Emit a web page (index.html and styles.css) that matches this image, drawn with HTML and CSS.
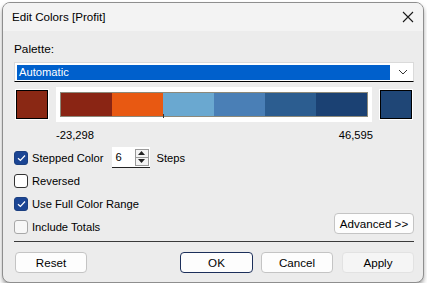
FILE: index.html
```html
<!DOCTYPE html>
<html>
<head>
<meta charset="utf-8">
<link rel="stylesheet" href="styles.css">
</head>
<body>
<div class="window">
  <div class="titlebar">
    <span class="title">Edit Colors [Profit]</span>
    <svg class="close" width="12" height="12" viewBox="0 0 12 12"><path d="M1 1L11 11M11 1L1 11" stroke="#1a1a1a" stroke-width="1.1" fill="none"/></svg>
  </div>
  <div class="content">
    <div class="label">Palette:</div>
    <div class="select">
      <div class="select-value">Automatic</div>
      <svg class="chevron" width="10" height="6" viewBox="0 0 10 6"><path d="M1 1L5 5L9 1" stroke="#333" stroke-width="1" fill="none"/></svg>
    </div>
    <div class="ramp">
      <div class="swatch swatch-start"></div>
      <div class="panel">
        <div class="bar">
          <div class="seg seg1"></div>
          <div class="seg seg2"></div>
          <div class="seg seg3"></div>
          <div class="seg seg4"></div>
          <div class="seg seg5"></div>
          <div class="seg seg6"></div>
          <div class="tick"></div>
        </div>
      </div>
      <div class="swatch swatch-end"></div>
    </div>
    <div class="range"><span>-23,298</span><span>46,595</span></div>
    <div class="row row-first">
      <span class="box checked"><svg width="9" height="8" viewBox="0 0 9 8"><path d="M1 4.2L3.4 6.5L8 1.5" stroke="#fff" stroke-width="1.2" fill="none"/></svg></span>
      <span class="text">Stepped Color</span>
      <div class="spin">
        <span class="spin-value">6</span>
        <div class="spin-btns">
          <div class="spin-btn"><svg width="7" height="4" viewBox="0 0 7 4"><path d="M0 4L3.5 0L7 4Z" fill="#222"/></svg></div>
          <div class="spin-btn spin-down"><svg width="7" height="4" viewBox="0 0 7 4"><path d="M0 0L7 0L3.5 4Z" fill="#222"/></svg></div>
        </div>
      </div>
      <span class="text steps">Steps</span>
    </div>
    <div class="row">
      <span class="box"></span>
      <span class="text">Reversed</span>
    </div>
    <div class="row">
      <span class="box checked"><svg width="9" height="8" viewBox="0 0 9 8"><path d="M1 4.2L3.4 6.5L8 1.5" stroke="#fff" stroke-width="1.2" fill="none"/></svg></span>
      <span class="text">Use Full Color Range</span>
    </div>
    <div class="row">
      <span class="box disabled"></span>
      <span class="text">Include Totals</span>
      <button class="btn btn-advanced">Advanced &gt;&gt;</button>
    </div>
    <div class="sep"></div>
    <div class="buttons">
      <button class="btn">Reset</button>
      <div class="btn-group">
        <button class="btn btn-default">OK</button>
        <button class="btn">Cancel</button>
        <button class="btn btn-disabled">Apply</button>
      </div>
    </div>
  </div>
</div>
</body>
</html>
```

FILE: styles.css
```css
* { box-sizing: border-box; }
html, body { margin: 0; padding: 0; background: #ffffff; }
body {
  font-family: "Liberation Sans", Arial, sans-serif;
  font-size: 11.2px;
  color: #000;
}
.window {
  margin: 2px 0 0 2px;
  width: 422px;
  height: 281px;
  border: 1px solid #8e8e8e;
  border-radius: 8px;
  background: #ececec;
  box-shadow: 0 3px 4px rgba(0,0,0,0.35);
  overflow: hidden;
}
.titlebar {
  height: 28px;
  background: #f3f3f3;
  display: flex;
  align-items: center;
  justify-content: space-between;
  padding: 0 9px 0 9px;
}
.title { font-size: 11.6px; line-height: 16px; }
.close { display: block; }
.content {
  padding: 10px 9px 0 11px;
}
.label { line-height: 16px; font-size: 11.8px; }
.select {
  margin-top: 5px;
  height: 20px;
  background: #fff;
  border: 1px solid #dadada;
  border-bottom: 1px solid #000;
  display: flex;
  align-items: center;
  padding: 1px 5px 1px 2px;
}
.select-value {
  flex: 1;
  height: 15px;
  background: #0060cc;
  color: #fff;
  line-height: 15px;
  padding-left: 2px;
  margin-right: 8px;
}
.chevron { display: block; }
.ramp {
  margin-top: 5px;
  display: flex;
  align-items: center;
  gap: 7px;
  padding-left: 1px;
}
.swatch {
  width: 34px;
  height: 31px;
  border: 1px solid #fff;
  outline: 1px solid #000;
  outline-offset: -2px;
}
.swatch-start { background: #8a2814; }
.swatch-end { background: #1f4676; }
.panel {
  width: 316px;
  height: 35px;
  background: #fff;
  padding: 5px 4px;
}
.bar {
  position: relative;
  height: 25px;
  border: 1px solid #8c897a;
  display: flex;
}
.seg { flex: 1; }
.seg1 { background: #8a2514; }
.seg2 { background: #e85912; }
.seg3 { background: #6aa8d0; }
.seg4 { background: #4a7fb6; }
.seg5 { background: #2c5d90; }
.seg6 { background: #1b4173; }
.tick {
  position: absolute;
  left: 102px;
  bottom: -2px;
  width: 1px;
  height: 4px;
  background: #333;
}
.range {
  margin: 5px 41px 0 42px;
  display: flex;
  justify-content: space-between;
  line-height: 16px;
}
.row {
  height: 23px;
  display: flex;
  align-items: center;
}
.row-first { margin-top: 3px; }
.box {
  width: 14px;
  height: 14px;
  border: 1px solid #333;
  border-radius: 3px;
  background: #fff;
  margin-right: 4px;
  display: flex;
  align-items: center;
  justify-content: center;
}
.box.checked { background: #1b4594; border-color: #1b3f80; }
.box.disabled { border-color: #a8a8a8; background: #f7f7f7; }
.text { line-height: 16px; }
.spin {
  margin-left: 8px;
  width: 38px;
  height: 21px;
  background: #fff;
  border-bottom: 1px solid #222;
  display: flex;
  align-items: center;
  padding: 0 1px 0 4px;
}
.spin-value { flex: 1; }
.spin-btns {
  width: 14px;
  height: 17px;
  border: 1px solid #9a9a9a;
  display: flex;
  flex-direction: column;
}
.spin-btn {
  flex: 1;
  display: flex;
  align-items: center;
  justify-content: center;
  background: #f4f4f4;
}
.spin-down { border-top: 1px solid #9a9a9a; }
.spin-btn svg { display: block; }
.steps { margin-left: 7px; }
.btn {
  font-family: inherit;
  font-size: 11.6px;
  color: #000;
  height: 21px;
  width: 72px;
  background: #fdfdfd;
  border: 1px solid #c4c4c4;
  border-radius: 4px;
  padding: 0;
  line-height: 18px;
}
.btn-advanced {
  margin-left: auto;
  width: 80px;
  align-self: flex-start;
  margin-top: -2px;
}
.sep {
  margin-top: 3px;
  height: 1px;
  background: #3a3a3a;
}
.buttons {
  margin-top: 10px;
  display: flex;
  justify-content: space-between;
  padding-left: 1px;
}
.btn-group { display: flex; gap: 8px; }
.btn-default { border: 1px solid #1c2f5a; width: 73px; }
.btn-disabled { background: #f5f5f5; border-color: #e2e2e2; margin-left: 1px; }
```
